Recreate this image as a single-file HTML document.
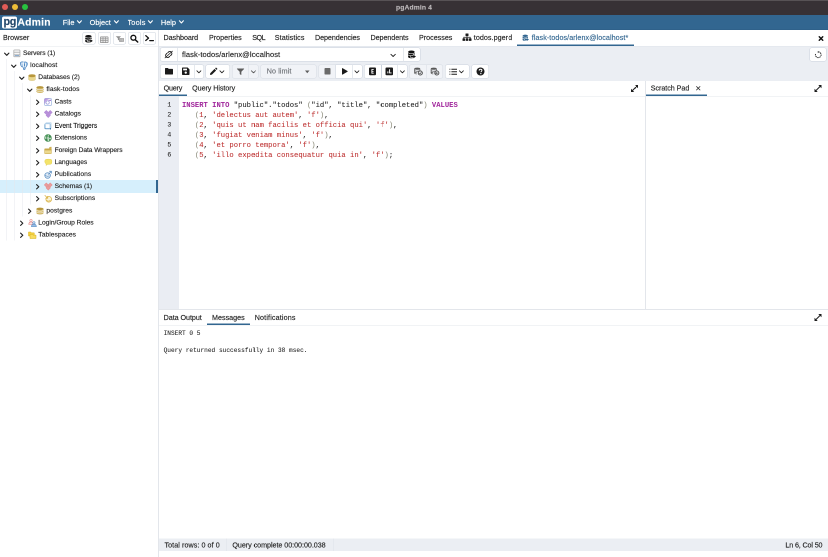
<!DOCTYPE html>
<html><head><meta charset="utf-8"><title>pgAdmin 4</title>
<style>
html,body{margin:0;padding:0;background:#fff;overflow:hidden;}
body{width:828px;height:557px;position:relative;}
#root{will-change:transform;position:absolute;left:0;top:0;width:1656px;height:1114px;transform:scale(.5);transform-origin:0 0;font-family:"Liberation Sans",sans-serif;font-size:14px;color:#222;background:#fff;overflow:hidden;-webkit-text-stroke:.27px currentColor;}
#root *{box-sizing:border-box;}
.abs{position:absolute;}
.t{position:absolute;white-space:nowrap;line-height:1;}
#titlebar{left:0;top:0;width:1656px;height:30px;background:#373135;border-top:2px solid #575255;}
.dot{position:absolute;width:12px;height:12px;border-radius:50%;}
#menubar{left:0;top:29.500px;width:1656px;height:30.500px;background:#326690;border-bottom:1.5px solid #2b5b83;}
.menu{color:#fff;font-size:14.6px;top:9px;}
.btn{position:absolute;background:#fff;border:1.5px solid #cbd2dc;}
.btn.dis{background:#f1f3f7;border-color:#d6dbe3;}
.row{position:absolute;left:0;width:316px;height:24px;}
.lbl{position:absolute;font-size:13.15px;white-space:nowrap;line-height:1;color:#222;}
.tab{position:absolute;font-size:14.2px;white-space:nowrap;line-height:1;color:#222;}
.code{position:absolute;left:364px;font-family:"Liberation Mono",monospace;font-size:14.37px;line-height:20px;height:20px;white-space:pre;color:#222;-webkit-text-stroke:.12px currentColor;}
.kw{color:#a0259b;font-weight:bold;-webkit-text-stroke:0;}
.s{color:#bd3030;}
.n{color:#bd3030;}
.p{color:#8c8c7c;}
.ln{position:absolute;left:318px;width:24.5px;text-align:right;font-family:"Liberation Mono",monospace;font-size:13px;-webkit-text-stroke:.15px currentColor;line-height:20px;height:20px;color:#222;}
.msg{-webkit-text-stroke:.12px currentColor;position:absolute;left:327.2px;font-family:"Liberation Mono",monospace;font-size:12.3px;line-height:1;white-space:pre;color:#222;}
svg{position:absolute;overflow:visible;}
.guide{position:absolute;width:1px;background:#e4e7ec;}
</style></head><body>
<div id="root">
<div id="titlebar" class="abs">
<div class="dot" style="left:4px;top:6px;background:#e25b56;"></div>
<div class="dot" style="left:24px;top:6px;background:#efbd37;"></div>
<div class="dot" style="left:44px;top:6px;background:#28c23f;"></div>
<div class="t" style="left:0;width:1656px;text-align:center;top:5.500px;font-size:13.500px;font-weight:bold;color:#bdb9bb;letter-spacing:.25px;">pgAdmin 4</div>
</div>
<div id="menubar" class="abs">
<div class="abs" style="left:4px;top:3.500px;width:30px;height:24px;background:#fff;border-radius:4px;"></div>
<div class="t" style="left:7px;top:3.500px;font-size:21.500px;font-weight:bold;color:#24486a;letter-spacing:-.6px;">pg</div>
<div class="t" style="left:35px;top:4.500px;font-size:20.500px;font-weight:bold;color:#fff;letter-spacing:.55px;">Admin</div>
<div class="t" style="left:125.6px;top:8px;font-size:14.72px;letter-spacing:-0.160px;color:#fff;">File</div>
<svg style="left:153.8px;top:11.5px" width="9.6" height="5.5" viewBox="0 0 9.6 5.5"><path d="M0.8 0.6 L4.8 4.9 L8.799999999999999 0.6" fill="none" stroke="#fff" stroke-width="2.2" stroke-linecap="round" stroke-linejoin="round"/></svg>
<div class="t" style="left:179.3px;top:8px;font-size:14.72px;letter-spacing:-0.056px;color:#fff;">Object</div>
<svg style="left:228.3px;top:11.5px" width="9.6" height="5.5" viewBox="0 0 9.6 5.5"><path d="M0.8 0.6 L4.8 4.9 L8.799999999999999 0.6" fill="none" stroke="#fff" stroke-width="2.2" stroke-linecap="round" stroke-linejoin="round"/></svg>
<div class="t" style="left:254.7px;top:8px;font-size:14.72px;letter-spacing:0.474px;color:#fff;">Tools</div>
<svg style="left:296px;top:11.5px" width="9.6" height="5.5" viewBox="0 0 9.6 5.5"><path d="M0.8 0.6 L4.8 4.9 L8.799999999999999 0.6" fill="none" stroke="#fff" stroke-width="2.2" stroke-linecap="round" stroke-linejoin="round"/></svg>
<div class="t" style="left:321.8px;top:8px;font-size:14.72px;letter-spacing:-0.038px;color:#fff;">Help</div>
<svg style="left:358px;top:11.5px" width="9.6" height="5.5" viewBox="0 0 9.6 5.5"><path d="M0.8 0.6 L4.8 4.9 L8.799999999999999 0.6" fill="none" stroke="#fff" stroke-width="2.2" stroke-linecap="round" stroke-linejoin="round"/></svg>
</div>
<div class="abs" style="left:0;top:60px;width:316px;height:33px;background:#fff;border-bottom:1px solid #e3e6eb;"></div>
<div class="t" style="left:6px;top:68px;font-size:14.31px;letter-spacing:-0.002px;">Browser</div>
<div class="abs" style="left:316px;top:60px;width:2px;height:1054px;background:#e3e6eb;"></div>
<div class="btn" style="left:165px;top:64px;width:26px;height:24.500px;border-radius:4px;"></div>
<div class="btn" style="left:196px;top:64px;width:26px;height:24.500px;border-radius:4px;"></div>
<div class="btn" style="left:226px;top:64px;width:26px;height:24.500px;border-radius:4px;"></div>
<div class="btn" style="left:256px;top:64px;width:26px;height:24.500px;border-radius:4px;"></div>
<div class="btn" style="left:286px;top:64px;width:26px;height:24.500px;border-radius:4px;"></div>
<svg style="left:170px;top:69.500px" width="16" height="15.500" viewBox="0 0 16 16">
<ellipse cx="6.800" cy="2.900" rx="6.600" ry="2.900" fill="#111"/>
<path d="M0.200 4.400v3.200c0 1.500 3 2.600 6.600 2.600s6.600-1.100 6.600-2.600V4.400c0 1.400-3 2.300-6.600 2.300S.2 5.800.2 4.400z" fill="#111"/>
<path d="M0.200 8.800v4c0 1.500 3 2.700 6.600 2.700s6.600-1.200 6.600-2.700V8.800c0 1.500-3 2.500-6.600 2.500S.2 10.300.2 8.800z" fill="#111"/>
<path d="M5.600 10.800h5.100V8.400l5.200 3.700-5.200 3.700v-2.400H5.600z" fill="#fff" stroke="#fff" stroke-width="2" stroke-linejoin="round"/><path d="M5.600 10.800h5.100V8.400l5.200 3.700-5.200 3.700v-2.400H5.600z" fill="#111"/>
</svg>
<svg style="left:200px;top:73px" width="17" height="13" viewBox="0 0 17 13">
<rect x=".8" y=".8" width="15.4" height="11.4" rx="1" fill="#e9e9e9" stroke="#8d8d8d" stroke-width="1.4"/>
<path d="M6 1v11M11 1v11M1 4.600h15M1 8.400h15" stroke="#8d8d8d" stroke-width="1.2" fill="none"/>
</svg>
<svg style="left:231px;top:72px" width="17" height="12" viewBox="0 0 17 12">
<path d="M0.500 0.500h10.500L7.300 4.500v4.500L4.700 7.500V4.500z" fill="#8f8f8f"/>
<rect x="7.600" y="4.600" width="8.800" height="6.800" rx=".8" fill="#d9d9d9" stroke="#9a9a9a" stroke-width="1.1"/>
<path d="M7.600 7h8.800M7.600 9.200h8.800M11 4.600v6.800" stroke="#9a9a9a" stroke-width=".9" fill="none"/>
</svg>
<svg style="left:260px;top:68.500px" width="17" height="16" viewBox="0 0 17 16">
<circle cx="6.700" cy="6.500" r="4.900" fill="none" stroke="#111" stroke-width="2.600"/>
<path d="M10.400 10.300l5 4.700" stroke="#111" stroke-width="3" stroke-linecap="round"/>
</svg>
<svg style="left:290px;top:70px" width="18" height="13" viewBox="0 0 18 13">
<path d="M1.500 1.300l5.600 4.900L1.500 11" fill="none" stroke="#111" stroke-width="2.500" stroke-linecap="round" stroke-linejoin="round"/>
<path d="M9.500 11.300h7.300" stroke="#111" stroke-width="2.400" stroke-linecap="round"/>
</svg>
<div class="abs" style="left:0;top:359.9px;width:316px;height:26.300px;background:#d6effc;border-right:4px solid #326690;"></div>
<div class="guide" style="left:13.1px;top:117.9px;height:363.4px;"></div>
<div class="guide" style="left:28.9px;top:142.2px;height:339.2px;"></div>
<div class="guide" style="left:44.6px;top:166.4px;height:266.5px;"></div>
<div class="guide" style="left:60.6px;top:190.6px;height:218.1px;"></div>
<svg style="left:7.7px;top:104.5px" width="11" height="7" viewBox="0 0 11 7"><path d="M1.200 1.200L5.500 5.600 9.800 1.200" fill="none" stroke="#222" stroke-width="2.300" stroke-linecap="round" stroke-linejoin="round"/></svg>
<div class="abs" style="left:25.5px;top:98.5px;width:18px;height:17px;"><svg width="16" height="16" viewBox="0 0 16 16"><rect x="1.600" y=".9" width="12.400" height="13.800" rx="1.200" fill="#ececec" stroke="#a3a3a3" stroke-width="1.300"/>
<path d="M1.600 5.400h12.400M1.600 10h12.400" stroke="#a3a3a3" stroke-width="1.200"/>
<path d="M3.400 12.400h8.800" stroke="#5f8fc0" stroke-width="1.500"/><path d="M3.400 7.700h8.800M3.400 3.200h8.800" stroke="#fafafa" stroke-width="1.500"/></svg></div>
<div class="t" style="left:46.0px;top:99px;font-size:13.33px;letter-spacing:-0.142px;">Servers (1)</div>
<svg style="left:21.5px;top:128.5px" width="11" height="7" viewBox="0 0 11 7"><path d="M1.200 1.200L5.500 5.600 9.800 1.200" fill="none" stroke="#222" stroke-width="2.300" stroke-linecap="round" stroke-linejoin="round"/></svg>
<div class="abs" style="left:39.3px;top:122.5px;width:18px;height:17px;"><svg width="17" height="17" viewBox="0 0 17 17"><path d="M2.200 1.800C4.200.3 7 .5 8.500 1.300 10.500.3 14 .5 15.300 2.500c1 1.800.2 5.300-1.600 8-.6.900-1.400.9-1.900.5 0 1.500-.2 3.500-.8 4.700-.6 1.100-2.300 1.200-3 .1-.6-1-.5-3.300-.6-4.800-1.500.6-3.300-.2-4.300-2.200C2 6.500 1 3.200 2.200 1.800z" fill="#8db7e0" stroke="#3f7ab8" stroke-width="1.100" stroke-linejoin="round"/>
<path d="M8.200 2c-.6 2.600-.4 6 .1 9.400M11.700 3.300c.7 2 .3 4.800-.2 7.300" fill="none" stroke="#fff" stroke-width="1.600" stroke-linecap="round"/><path d="M4 3.400c.9-.6 2-.5 2.700.2M4.900 5v3" fill="none" stroke="#fff" stroke-width="1.400" stroke-linecap="round"/><path d="M9.800 4.500v4" fill="none" stroke="#2f6ba8" stroke-width="1.200" stroke-linecap="round"/></svg></div>
<div class="t" style="left:60.3px;top:123px;font-size:13.33px;letter-spacing:0.207px;">localhost</div>
<svg style="left:37.7px;top:152.5px" width="11" height="7" viewBox="0 0 11 7"><path d="M1.200 1.200L5.500 5.600 9.800 1.200" fill="none" stroke="#222" stroke-width="2.300" stroke-linecap="round" stroke-linejoin="round"/></svg>
<div class="abs" style="left:55.5px;top:146.5px;width:18px;height:17px;"><svg width="16" height="16" viewBox="0 0 16 16"><path d="M1.300 4v8c0 1.200 3 2.100 6.700 2.100s6.700-.9 6.700-2.100V4z" fill="#e9d78e" stroke="#cdb462" stroke-width=".9"/><path d="M1.300 4v1.500c0 1.100 3 1.900 6.700 1.900s6.700-.8 6.700-1.900V4z" fill="#b8973c"/><ellipse cx="8" cy="4" rx="6.700" ry="2" fill="#b8973c" stroke="#b8973c" stroke-width=".9"/></svg></div>
<div class="t" style="left:76.6px;top:147px;font-size:13.33px;letter-spacing:-0.047px;">Databases (2)</div>
<svg style="left:53.8px;top:176.5px" width="11" height="7" viewBox="0 0 11 7"><path d="M1.200 1.200L5.500 5.600 9.800 1.200" fill="none" stroke="#222" stroke-width="2.300" stroke-linecap="round" stroke-linejoin="round"/></svg>
<div class="abs" style="left:71.6px;top:170.5px;width:18px;height:17px;"><svg width="16" height="16" viewBox="0 0 16 16">
<path d="M1.300 10.800v1.500c0 1.200 3 2.100 6.700 2.100s6.700-.9 6.700-2.100v-1.500c0 1.200-3 2.100-6.700 2.100s-6.700-.9-6.700-2.100z" fill="#dcc268" stroke="#c2a24a" stroke-width=".8"/>
<path d="M1.300 7.200v1.700c0 1.200 3 2.100 6.700 2.100s6.700-.9 6.700-2.100V7.200c0 1.200-3 2.100-6.700 2.100S1.300 8.400 1.300 7.200z" fill="#e7d283" stroke="#c2a24a" stroke-width=".8"/>
<path d="M1.300 3.700v1.600c0 1.200 3 2.100 6.700 2.100s6.700-.9 6.700-2.100V3.700z" fill="#e7d283" stroke="#c2a24a" stroke-width=".8"/>
<ellipse cx="8" cy="3.700" rx="6.700" ry="2" fill="#b8973c" stroke="#b08f35" stroke-width=".8"/></svg></div>
<div class="t" style="left:92.7px;top:171px;font-size:13.33px;letter-spacing:0.174px;">flask-todos</div>
<svg style="left:71.7px;top:199.0px" width="7" height="11" viewBox="0 0 7 11"><path d="M1.200 1.200L5.600 5.500 1.200 9.800" fill="none" stroke="#222" stroke-width="2.300" stroke-linecap="round" stroke-linejoin="round"/></svg>
<div class="abs" style="left:87.7px;top:195.5px;width:18px;height:17px;"><svg width="16" height="16" viewBox="0 0 16 16"><rect x="1" y="1" width="14" height="14" rx="2" fill="#fff" stroke="#9fb6e0" stroke-width="1.400"/>
<path d="M1 9V3a2 2 0 0 1 2-2h7z" fill="#c9a6e6"/><path d="M1.700 11V3a1.300 1.300 0 0 1 1.300-1.300h8" fill="none" stroke="#a57fd3" stroke-width="1.400"/>
<circle cx="7.200" cy="9" r="3.300" fill="#fff" stroke="#8d8fd6" stroke-width="1.300"/><path d="M8.500 6.500c1-1.800 3-2.500 4.600-1.600M13.300 3v2.300H11" fill="none" stroke="#a57fd3" stroke-width="1.300"/></svg></div>
<div class="t" style="left:109.2px;top:196px;font-size:13.33px;letter-spacing:-0.009px;">Casts</div>
<svg style="left:71.7px;top:223.0px" width="7" height="11" viewBox="0 0 7 11"><path d="M1.200 1.200L5.600 5.500 1.200 9.800" fill="none" stroke="#222" stroke-width="2.300" stroke-linecap="round" stroke-linejoin="round"/></svg>
<div class="abs" style="left:87.7px;top:219.5px;width:18px;height:17px;"><svg width="17" height="16" viewBox="0 0 17 16"><g fill="#b790da" stroke="#b48ad6" stroke-width="1.200" stroke-linejoin="round">
<path d="M4.600 .8l4 4-4 4-4-4z"/><path d="M12.400 .8l4 4-4 4-4-4z"/><path d="M8.500 6.300l4.400 4.400-4.400 4.400-4.400-4.400z"/></g></svg></div>
<div class="t" style="left:109.2px;top:220px;font-size:13.33px;letter-spacing:0.014px;">Catalogs</div>
<svg style="left:71.7px;top:247.0px" width="7" height="11" viewBox="0 0 7 11"><path d="M1.200 1.200L5.600 5.500 1.200 9.800" fill="none" stroke="#222" stroke-width="2.300" stroke-linecap="round" stroke-linejoin="round"/></svg>
<div class="abs" style="left:87.7px;top:243.5px;width:18px;height:17px;"><svg width="16" height="16" viewBox="0 0 16 16"><path d="M3.500 1.600h10.500v10.500" fill="none" stroke="#a9cbe6" stroke-width="1.400"/><rect x="1.800" y="3.400" width="10.400" height="10" rx="1.200" fill="#fff" stroke="#8ab6dc" stroke-width="1.500"/>
<path d="M1.800 5v7.200a1.200 1.200 0 0 0 1.200 1.200h7" fill="none" stroke="#4f8fc4" stroke-width="1.500"/>
<circle cx="12.700" cy="13.500" r="1.500" fill="#2d6aa3"/></svg></div>
<div class="t" style="left:109.2px;top:244px;font-size:13.33px;letter-spacing:-0.053px;">Event Triggers</div>
<svg style="left:71.7px;top:271.0px" width="7" height="11" viewBox="0 0 7 11"><path d="M1.200 1.200L5.600 5.500 1.200 9.800" fill="none" stroke="#222" stroke-width="2.300" stroke-linecap="round" stroke-linejoin="round"/></svg>
<div class="abs" style="left:87.7px;top:267.5px;width:18px;height:17px;"><svg width="16" height="16" viewBox="0 0 16 16"><circle cx="8" cy="8" r="6.900" fill="#e9f3ea" stroke="#3f8a4f" stroke-width="1.200"/>
<path d="M8 1.100c-3 2-3 11.800 0 13.800M1.100 8h13.800" stroke="#3f8a4f" stroke-width="1.100" fill="none"/>
<path d="M2.600 4c1.200-1.600 3-2.700 5-2.900l.6 3.900-3.800 2.200z" fill="#4f9a5e"/><path d="M9.500 1.400c2.600.6 4.600 2.600 5.200 5.200l-3.600 1.200-2.400-2.300z" fill="#3f8a4f"/>
<path d="M2 10l3.500-1 2 2.200-.5 3.600C4.500 14.300 2.600 12.500 2 10z" fill="#3f8a4f"/><path d="M9.600 9.700l4.300.3c-.6 2.200-2.300 3.900-4.500 4.600z" fill="#4f9a5e"/></svg></div>
<div class="t" style="left:109.2px;top:268px;font-size:13.33px;letter-spacing:-0.031px;">Extensions</div>
<svg style="left:71.7px;top:296.0px" width="7" height="11" viewBox="0 0 7 11"><path d="M1.200 1.200L5.600 5.500 1.200 9.800" fill="none" stroke="#222" stroke-width="2.300" stroke-linecap="round" stroke-linejoin="round"/></svg>
<div class="abs" style="left:87.7px;top:292.5px;width:18px;height:17px;"><svg width="16" height="16" viewBox="0 0 16 16"><rect x="1.200" y="4.500" width="13.600" height="10" rx="1" fill="#ecd98f" stroke="#c8a94a" stroke-width="1"/>
<rect x="1.200" y="4.500" width="13.600" height="3.300" fill="#c8a94a"/><path d="M11 4.500V1.800l3.500-.9v3.600" fill="#d9b44a" stroke="#b8963a" stroke-width=".8"/></svg></div>
<div class="t" style="left:109.2px;top:293px;font-size:13.33px;letter-spacing:-0.119px;">Foreign Data Wrappers</div>
<svg style="left:71.7px;top:320.0px" width="7" height="11" viewBox="0 0 7 11"><path d="M1.200 1.200L5.600 5.500 1.200 9.800" fill="none" stroke="#222" stroke-width="2.300" stroke-linecap="round" stroke-linejoin="round"/></svg>
<div class="abs" style="left:87.7px;top:316.5px;width:18px;height:17px;"><svg width="17" height="16" viewBox="0 0 17 16"><path d="M2.500 2.500c3-1.400 8-1.600 12.300-.3 1.400 2.500 1.200 6.300-.3 8.800-2.600.8-5 .9-7 .6L4 14l.3-3C1.600 9.300 1 5.300 2.500 2.500z" fill="#f3e36a" stroke="#e3cf4a" stroke-width="1"/></svg></div>
<div class="t" style="left:109.2px;top:317px;font-size:13.33px;letter-spacing:-0.078px;">Languages</div>
<svg style="left:71.7px;top:344.0px" width="7" height="11" viewBox="0 0 7 11"><path d="M1.200 1.200L5.600 5.500 1.200 9.800" fill="none" stroke="#222" stroke-width="2.300" stroke-linecap="round" stroke-linejoin="round"/></svg>
<div class="abs" style="left:87.7px;top:340.5px;width:18px;height:17px;"><svg width="17" height="17" viewBox="0 0 17 17"><circle cx="7.200" cy="10" r="5.600" fill="#dfeaf5" stroke="#5b8fc2" stroke-width="1.500"/>
<path d="M2.500 9c1.500 2.500 5 3.500 8.500 1.500" fill="none" stroke="#5b8fc2" stroke-width="1.300"/>
<path d="M9 7.500L14.500 2M10.800 1.600h4v4" fill="none" stroke="#5b8fc2" stroke-width="1.500" stroke-linecap="round" stroke-linejoin="round"/></svg></div>
<div class="t" style="left:109.2px;top:341px;font-size:13.33px;letter-spacing:0.123px;">Publications</div>
<svg style="left:71.7px;top:368.0px" width="7" height="11" viewBox="0 0 7 11"><path d="M1.200 1.200L5.600 5.500 1.200 9.800" fill="none" stroke="#222" stroke-width="2.300" stroke-linecap="round" stroke-linejoin="round"/></svg>
<div class="abs" style="left:87.7px;top:364.5px;width:18px;height:17px;"><svg width="17" height="16" viewBox="0 0 17 16"><g fill="#e99c9c" stroke="#e58f8f" stroke-width="1.200" stroke-linejoin="round">
<path d="M4.600 .8l4 4-4 4-4-4z"/><path d="M12.400 .8l4 4-4 4-4-4z"/><path d="M8.500 6.300l4.400 4.400-4.400 4.400-4.400-4.400z"/></g></svg></div>
<div class="t" style="left:109.2px;top:365px;font-size:13.33px;letter-spacing:-0.045px;">Schemas (1)</div>
<svg style="left:71.7px;top:392.0px" width="7" height="11" viewBox="0 0 7 11"><path d="M1.200 1.200L5.600 5.500 1.200 9.800" fill="none" stroke="#222" stroke-width="2.300" stroke-linecap="round" stroke-linejoin="round"/></svg>
<div class="abs" style="left:87.7px;top:388.5px;width:18px;height:17px;"><svg width="17" height="17" viewBox="0 0 17 17"><circle cx="9.500" cy="9.500" r="5.700" fill="#fbf3d6" stroke="#d9b44a" stroke-width="1.500"/>
<path d="M5 11c1.500 2.500 5.500 3 8 .5" fill="none" stroke="#d9b44a" stroke-width="1.200"/>
<path d="M1.800 1.800l5.400 5.400M7.500 3.400v4h-4" fill="none" stroke="#d9b44a" stroke-width="1.500" stroke-linecap="round" stroke-linejoin="round"/></svg></div>
<div class="t" style="left:109.2px;top:389px;font-size:13.33px;letter-spacing:0.093px;">Subscriptions</div>
<svg style="left:55.6px;top:417.0px" width="7" height="11" viewBox="0 0 7 11"><path d="M1.200 1.200L5.600 5.500 1.200 9.800" fill="none" stroke="#222" stroke-width="2.300" stroke-linecap="round" stroke-linejoin="round"/></svg>
<div class="abs" style="left:71.6px;top:413.5px;width:18px;height:17px;"><svg width="16" height="16" viewBox="0 0 16 16">
<path d="M1.300 10.800v1.500c0 1.200 3 2.100 6.700 2.100s6.700-.9 6.700-2.100v-1.500c0 1.200-3 2.100-6.700 2.100s-6.700-.9-6.700-2.100z" fill="#dcc268" stroke="#c2a24a" stroke-width=".8"/>
<path d="M1.300 7.200v1.700c0 1.200 3 2.100 6.700 2.100s6.700-.9 6.700-2.100V7.200c0 1.200-3 2.100-6.700 2.100S1.300 8.400 1.300 7.200z" fill="#e7d283" stroke="#c2a24a" stroke-width=".8"/>
<path d="M1.300 3.700v1.600c0 1.200 3 2.100 6.700 2.100s6.700-.9 6.700-2.100V3.700z" fill="#e7d283" stroke="#c2a24a" stroke-width=".8"/>
<ellipse cx="8" cy="3.700" rx="6.700" ry="2" fill="#b8973c" stroke="#b08f35" stroke-width=".8"/></svg></div>
<div class="t" style="left:92.7px;top:414px;font-size:13.33px;letter-spacing:0.138px;">postgres</div>
<svg style="left:39.5px;top:441.0px" width="7" height="11" viewBox="0 0 7 11"><path d="M1.200 1.200L5.600 5.500 1.200 9.800" fill="none" stroke="#222" stroke-width="2.300" stroke-linecap="round" stroke-linejoin="round"/></svg>
<div class="abs" style="left:55.5px;top:437.5px;width:18px;height:17px;"><svg width="18" height="16" viewBox="0 0 18 16"><circle cx="6" cy="3.200" r="2.300" fill="#fff" stroke="#e58b8b" stroke-width="1.300"/>
<path d="M1.500 10.500c.3-3 2-4.500 4.500-4.500s4.200 1.500 4.500 4.500z" fill="#fdf0f0" stroke="#e58b8b" stroke-width="1.300"/>
<circle cx="11.800" cy="7.600" r="2.300" fill="#e9f1fa" stroke="#5b8fc8" stroke-width="1.300"/>
<path d="M6.800 15.200c.3-3.200 2.300-4.800 5-4.800s4.700 1.600 5 4.800z" fill="#9dbfe3" stroke="#5b8fc8" stroke-width="1.300"/></svg></div>
<div class="t" style="left:76.6px;top:438px;font-size:13.33px;letter-spacing:-0.030px;">Login/Group Roles</div>
<svg style="left:39.5px;top:465.0px" width="7" height="11" viewBox="0 0 7 11"><path d="M1.200 1.200L5.600 5.500 1.200 9.800" fill="none" stroke="#222" stroke-width="2.300" stroke-linecap="round" stroke-linejoin="round"/></svg>
<div class="abs" style="left:55.5px;top:461.5px;width:18px;height:17px;"><svg width="17" height="16" viewBox="0 0 17 16"><path d="M1 2h4.500l1.500 1.700h5.500V10H1z" fill="#f4d03f" stroke="#d9b018" stroke-width="1"/>
<path d="M4 6.500h4.500L10 8.200h6V15H4z" fill="#f7dc5f" stroke="#d9b018" stroke-width="1"/></svg></div>
<div class="t" style="left:76.6px;top:462px;font-size:13.33px;letter-spacing:0.126px;">Tablespaces</div>
<div class="abs" style="left:318px;top:60px;width:1338px;height:33px;background:#fff;border-bottom:1px solid #e3e6eb;"></div>
<div class="t" style="left:327px;top:68px;font-size:14.31px;letter-spacing:-0.077px;">Dashboard</div>
<div class="t" style="left:418px;top:68px;font-size:14.31px;letter-spacing:0.037px;">Properties</div>
<div class="t" style="left:504.4px;top:68px;font-size:14.31px;letter-spacing:-0.869px;">SQL</div>
<div class="t" style="left:549.6px;top:68px;font-size:14.31px;letter-spacing:0.224px;">Statistics</div>
<div class="t" style="left:630px;top:68px;font-size:14.31px;letter-spacing:-0.129px;">Dependencies</div>
<div class="t" style="left:741px;top:68px;font-size:14.31px;letter-spacing:-0.111px;">Dependents</div>
<div class="t" style="left:838px;top:68px;font-size:14.31px;letter-spacing:0.001px;">Processes</div>
<svg style="left:925px;top:66.500px" width="18" height="15" viewBox="0 0 18 15"><g fill="#1b1b1b">
<rect x="6" y="0" width="6" height="5" rx=".7"/><rect x="0" y="9.800" width="5.200" height="5" rx=".7"/><rect x="6.400" y="9.800" width="5.200" height="5" rx=".7"/><rect x="12.800" y="9.800" width="5.200" height="5" rx=".7"/></g>
<path d="M9 4.800v5.200M2.600 10V7.400h12.800V10" fill="none" stroke="#1b1b1b" stroke-width="1.500"/></svg>
<div class="t" style="left:947.6px;top:68px;font-size:14.31px;letter-spacing:0.107px;">todos.pgerd</div>
<svg style="left:1044.500px;top:68.500px" width="13" height="13.500" viewBox="0 0 16 16">
<ellipse cx="6.800" cy="2.900" rx="6.600" ry="2.900" fill="#326690"/>
<path d="M0.200 4.400v3.200c0 1.500 3 2.600 6.600 2.600s6.600-1.100 6.600-2.600V4.400c0 1.400-3 2.300-6.600 2.300S.2 5.800.2 4.400z" fill="#326690"/>
<path d="M0.200 8.800v4c0 1.500 3 2.700 6.600 2.700s6.600-1.200 6.600-2.700V8.800c0 1.500-3 2.500-6.600 2.500S.2 10.300.2 8.800z" fill="#326690"/>
<path d="M5.600 10.800h5.100V8.400l5.200 3.700-5.200 3.700v-2.400H5.600z" fill="#fff" stroke="#fff" stroke-width="2" stroke-linejoin="round"/><path d="M5.600 10.800h5.100V8.400l5.200 3.700-5.200 3.700v-2.400H5.600z" fill="#326690"/>
</svg>
<div class="t" style="left:1063.5px;top:68px;font-size:14.31px;letter-spacing:0.158px;color:#326690;">flask-todos/arlenx@localhost*</div>
<div class="abs" style="left:1034px;top:88.500px;width:234px;height:3.500px;background:#326690;"></div>
<svg style="left:1636.500px;top:71.500px" width="10" height="10" viewBox="0 0 10 10"><path d="M1.500 1.500l7 7M8.500 1.500l-7 7" stroke="#111" stroke-width="2.900" stroke-linecap="round"/></svg>
<div class="abs" style="left:318px;top:92px;width:1338px;height:70px;background:#ebeef3;border-top:1.500px solid #dfe3ea;"></div>
<div class="btn" style="left:320px;top:94.500px;width:35px;height:28.500px;border-radius:4px 0 0 4px;"></div>
<div class="btn" style="left:354px;top:94.500px;width:454px;height:28.500px;border-radius:0;"></div>
<div class="btn" style="left:807px;top:94.500px;width:34px;height:28.500px;border-radius:0 4px 4px 0;"></div>
<svg style="left:327.500px;top:100px" width="19" height="18" viewBox="0 0 19 18"><g transform="rotate(-42 9.500 9)" fill="none" stroke="#1b1b1b" stroke-linecap="round">
<path d="M8.300 5H6.500a4 4 0 0 0 0 8h1.800" stroke-width="1.900"/><path d="M10.700 5h1.800a4 4 0 0 1 0 8h-1.800" stroke-width="1.900"/>
<path d="M-.5 9h20" stroke-width="1.500"/></g></svg>
<div class="t" style="left:364px;top:101.3px;font-size:15.02px;letter-spacing:0.149px;">flask-todos/arlenx@localhost</div>
<svg style="left:780.5px;top:107.5px" width="10.5" height="5.6" viewBox="0 0 10.5 5.6"><path d="M0.8 0.6 L5.25 5.0 L9.7 0.6" fill="none" stroke="#222" stroke-width="1.8" stroke-linecap="round" stroke-linejoin="round"/></svg>
<svg style="left:816px;top:101px" width="16" height="16" viewBox="0 0 16 16">
<ellipse cx="6.800" cy="2.900" rx="6.600" ry="2.900" fill="#111"/>
<path d="M0.200 4.400v3.200c0 1.500 3 2.600 6.600 2.600s6.600-1.100 6.600-2.600V4.400c0 1.400-3 2.300-6.600 2.300S.2 5.800.2 4.400z" fill="#111"/>
<path d="M0.200 8.800v4c0 1.500 3 2.700 6.600 2.700s6.600-1.200 6.600-2.700V8.800c0 1.500-3 2.500-6.600 2.500S.2 10.300.2 8.800z" fill="#111"/>
<path d="M5.600 10.800h5.100V8.400l5.200 3.700-5.200 3.700v-2.400H5.600z" fill="#fff" stroke="#fff" stroke-width="2" stroke-linejoin="round"/><path d="M5.600 10.800h5.100V8.400l5.200 3.700-5.200 3.700v-2.400H5.600z" fill="#111"/>
</svg>
<div class="btn" style="left:1619px;top:94.500px;width:34px;height:28.500px;border-radius:4px;"></div>
<svg style="left:1629px;top:102px" width="15" height="15" viewBox="0 0 15 15"><path d="M7.500 1.800a5.700 5.700 0 1 1-5.300 3.600" fill="none" stroke="#222" stroke-width="1.900" stroke-dasharray="2.800 1.400"/><path d="M7.800 .2v3.600L5.600 2z" fill="#222"/></svg>
<div class="btn" style="left:320px;top:128.5px;width:36px;height:28.5px;border-radius:4px 0 0 4px;"></div>
<div class="btn" style="left:355px;top:128.5px;width:35px;height:28.5px;border-radius:0;"></div>
<div class="btn" style="left:389px;top:128.5px;width:18.5px;height:28.5px;border-radius:0 4px 4px 0;"></div>
<svg style="left:330px;top:136px" width="16" height="13" viewBox="0 0 16 13"><path d="M1.300 0h4.500l1.600 1.800h7.300c.7 0 1.300.6 1.300 1.300v8.600c0 .7-.6 1.300-1.300 1.300H1.300C.6 13 0 12.400 0 11.700V1.300C0 .6.600 0 1.300 0z" fill="#1b1b1b"/></svg>
<svg style="left:364px;top:135px" width="15" height="15" viewBox="0 0 15 15"><path d="M1.500 0h9.800L15 3.700v9.800c0 .8-.7 1.500-1.500 1.500h-12C.7 15 0 14.300 0 13.500v-12C0 .7.700 0 1.500 0z" fill="#1b1b1b"/><rect x="2.300" y="2.300" width="7.700" height="3.400" fill="#fff"/><circle cx="7.500" cy="10.300" r="2.300" fill="#fff"/></svg>
<svg style="left:393px;top:140.5px" width="9.6" height="5.2" viewBox="0 0 9.6 5.2"><path d="M0.8 0.6 L4.8 4.6000000000000005 L8.799999999999999 0.6" fill="none" stroke="#222" stroke-width="1.7" stroke-linecap="round" stroke-linejoin="round"/></svg>
<div class="btn" style="left:411px;top:128.5px;width:49px;height:28.5px;border-radius:4px;"></div>
<svg style="left:420px;top:135px" width="15" height="15" viewBox="0 0 15 15"><path d="M0 15l.7-3.800 8.400-8.400 3.100 3.100-8.400 8.400z" fill="#1b1b1b"/><path d="M10.200 1.700l1-1c.5-.5 1.200-.5 1.700 0l1.400 1.400c.5.500.5 1.200 0 1.700l-1 1z" fill="#1b1b1b"/></svg>
<svg style="left:438.5px;top:140.5px" width="9.6" height="5.2" viewBox="0 0 9.6 5.2"><path d="M0.8 0.6 L4.8 4.6000000000000005 L8.799999999999999 0.6" fill="none" stroke="#222" stroke-width="1.7" stroke-linecap="round" stroke-linejoin="round"/></svg>
<div class="btn dis" style="left:464px;top:128.5px;width:33px;height:28.5px;border-radius:4px 0 0 4px;"></div>
<div class="btn dis" style="left:496px;top:128.5px;width:21px;height:28.5px;border-radius:0 4px 4px 0;"></div>
<svg style="left:474px;top:136.500px" width="14" height="13" viewBox="0 0 14 13"><path d="M.3 0h13.400c.5 0 .7.600.4.900L8.700 6.500v5.800c0 .5-.6.800-1 .5l-2-1.500c-.2-.1-.3-.3-.3-.5V6.500L0 .9C-.3.600-.1 0 .3 0z" fill="#5c5c5c"/></svg>
<svg style="left:501.5px;top:140.5px" width="9.6" height="5.2" viewBox="0 0 9.6 5.2"><path d="M0.8 0.6 L4.8 4.6000000000000005 L8.799999999999999 0.6" fill="none" stroke="#555" stroke-width="1.7" stroke-linecap="round" stroke-linejoin="round"/></svg>
<div class="btn dis" style="left:521px;top:128.5px;width:112px;height:28.5px;border-radius:4px;"></div>
<div class="t" style="left:533.5px;top:135px;font-size:14.31px;letter-spacing:0.230px;color:#6c7075;">No limit</div>
<svg style="left:610px;top:141px" width="9" height="5.500" viewBox="0 0 9 5.500"><path d="M0 0h9L4.500 5.500z" fill="#5f5f5f"/></svg>
<div class="btn dis" style="left:636.5px;top:128.5px;width:35.5px;height:28.5px;border-radius:4px 0 0 4px;"></div>
<div class="btn" style="left:671px;top:128.5px;width:34px;height:28.5px;border-radius:0;"></div>
<div class="btn" style="left:704px;top:128.5px;width:20.5px;height:28.5px;border-radius:0 4px 4px 0;"></div>
<div class="abs" style="left:648.500px;top:136px;width:12px;height:12.500px;background:#6a6a6a;border-radius:1.500px;"></div>
<svg style="left:683.500px;top:136px" width="11.500" height="13.500" viewBox="0 0 11.500 13.500"><path d="M1 .3l9.900 5.700c.6.400.6 1.100 0 1.500L1 13.200c-.5.300-1-.1-1-.7V1C0 .4.500 0 1 .3z" fill="#1b1b1b"/></svg>
<svg style="left:709px;top:140.5px" width="9.6" height="5.2" viewBox="0 0 9.6 5.2"><path d="M0.8 0.6 L4.8 4.6000000000000005 L8.799999999999999 0.6" fill="none" stroke="#222" stroke-width="1.7" stroke-linecap="round" stroke-linejoin="round"/></svg>
<div class="btn" style="left:728px;top:128.5px;width:35px;height:28.5px;border-radius:4px 0 0 4px;"></div>
<div class="btn" style="left:762px;top:128.5px;width:34px;height:28.5px;border-radius:0;"></div>
<div class="btn" style="left:795px;top:128.5px;width:20px;height:28.5px;border-radius:0 4px 4px 0;"></div>
<svg style="left:738px;top:135px" width="14" height="15.500" viewBox="0 0 14 15.500"><rect width="14" height="15.500" rx="2" fill="#1b1b1b"/><path d="M4.800 3.300h4.600v1.700H6.700v2h2.400v1.600H6.700v2h2.700v1.700H4.800z" fill="#fff"/></svg>
<svg style="left:771px;top:135px" width="15" height="15.500" viewBox="0 0 15 15.500"><rect width="15" height="15.500" rx="2" fill="#1b1b1b"/><path d="M3.800 7.800h1.900v4h-1.900zM7.200 3.600h1.900v6.300h3v1.900H7.200z" fill="#fff"/></svg>
<svg style="left:800px;top:140.5px" width="9.6" height="5.2" viewBox="0 0 9.6 5.2"><path d="M0.8 0.6 L4.8 4.6000000000000005 L8.799999999999999 0.6" fill="none" stroke="#222" stroke-width="1.7" stroke-linecap="round" stroke-linejoin="round"/></svg>
<div class="btn dis" style="left:818px;top:128.5px;width:36px;height:28.5px;border-radius:4px 0 0 4px;"></div>
<div class="btn dis" style="left:853px;top:128.5px;width:33px;height:28.5px;border-radius:0 4px 4px 0;"></div>
<svg style="left:828px;top:135px" width="18" height="16" viewBox="0 0 18 16">
<ellipse cx="6.500" cy="2.400" rx="6" ry="2.200" fill="#585858"/>
<g fill="none" stroke="#585858" stroke-width="1.500"><path d="M1.200 3v8c0 .9 1.900 1.700 4.300 1.900"/><path d="M11.800 3v3"/><path d="M1.200 5.800c.6 1 2.800 1.600 5.300 1.600 1.700 0 3.200-.3 4.200-.7"/><path d="M1.200 8.800c.5.900 2.300 1.500 4.500 1.600"/></g>
<circle cx="12.600" cy="11" r="4.100" fill="#f1f3f7" stroke="#4a4a4a" stroke-width="1.900"/><path d="M10.600 11l1.500 1.500 2.600-2.800" fill="none" stroke="#4a4a4a" stroke-width="1.500"/></svg>
<svg style="left:861px;top:135px" width="18" height="16" viewBox="0 0 18 16">
<ellipse cx="6.500" cy="2.400" rx="6" ry="2.200" fill="#585858"/>
<g fill="none" stroke="#585858" stroke-width="1.500"><path d="M1.200 3v8c0 .9 1.900 1.700 4.300 1.900"/><path d="M11.800 3v3"/><path d="M1.200 5.800c.6 1 2.800 1.600 5.300 1.600 1.700 0 3.200-.3 4.200-.7"/><path d="M1.200 8.800c.5.900 2.300 1.500 4.500 1.600"/></g>
<circle cx="12.600" cy="11" r="4.100" fill="#f1f3f7" stroke="#4a4a4a" stroke-width="1.900"/><path d="M10.400 11.200h4.600M12 9.400l-1.800 1.800 1.800 1.800" fill="none" stroke="#4a4a4a" stroke-width="1.400"/></svg>
<div class="btn" style="left:890px;top:128.5px;width:49px;height:28.5px;border-radius:4px;"></div>
<svg style="left:899px;top:136.500px" width="15" height="13" viewBox="0 0 15 13"><g fill="#1b1b1b"><rect x="0" y=".4" width="1.600" height="2.200"/><rect x="0" y="5.400" width="1.600" height="2.200"/><rect x="0" y="10.400" width="1.600" height="2.200"/></g><path d="M3.800 1.500H15M3.800 6.500H15M3.800 11.500H15" stroke="#1b1b1b" stroke-width="1.800"/></svg>
<svg style="left:917.5px;top:140.5px" width="9.6" height="5.2" viewBox="0 0 9.6 5.2"><path d="M0.8 0.6 L4.8 4.6000000000000005 L8.799999999999999 0.6" fill="none" stroke="#222" stroke-width="1.7" stroke-linecap="round" stroke-linejoin="round"/></svg>
<div class="btn" style="left:942.5px;top:128.5px;width:35px;height:28.5px;border-radius:4px;"></div>
<svg style="left:953px;top:135px" width="16" height="16" viewBox="0 0 16 16"><circle cx="8" cy="8" r="8" fill="#1b1b1b"/><path d="M5.300 6.100c.1-1.600 1.200-2.500 2.800-2.500 1.500 0 2.700.9 2.700 2.300 0 1.700-2 1.900-2 3.500" fill="none" stroke="#fff" stroke-width="2"/><circle cx="8.700" cy="12.300" r="1.300" fill="#fff"/></svg>
<div class="abs" style="left:318px;top:162px;width:1338px;height:31px;background:#fff;border-bottom:1px solid #e3e6eb;"></div>
<div class="t" style="left:327.3px;top:169px;font-size:14.31px;letter-spacing:-0.410px;">Query</div>
<div class="t" style="left:384.3px;top:169px;font-size:14.31px;letter-spacing:-0.116px;">Query History</div>
<div class="abs" style="left:318px;top:188.500px;width:56px;height:3.500px;background:#326690;"></div>
<svg style="left:1262px;top:169.5px" width="14" height="14" viewBox="0 0 14 14"><path d="M3 11L11 3" stroke="#1b1b1b" stroke-width="2"/><path d="M7.600 0H14v6.400z" fill="#1b1b1b"/><path d="M0 7.600V14h6.400z" fill="#1b1b1b"/></svg>
<div class="abs" style="left:1290px;top:162px;width:2px;height:456px;background:#e3e6eb;"></div>
<div class="t" style="left:1301.5px;top:169px;font-size:14.31px;letter-spacing:-0.080px;">Scratch Pad</div>
<svg style="left:1391.500px;top:172px" width="9" height="9" viewBox="0 0 9 9"><path d="M1 1l7 7M8 1L1 8" stroke="#222" stroke-width="1.500" stroke-linecap="round"/></svg>
<div class="abs" style="left:1292px;top:188.500px;width:122px;height:3.500px;background:#326690;"></div>
<svg style="left:1629px;top:169.5px" width="14" height="14" viewBox="0 0 14 14"><path d="M3 11L11 3" stroke="#1b1b1b" stroke-width="2"/><path d="M7.600 0H14v6.400z" fill="#1b1b1b"/><path d="M0 7.600V14h6.400z" fill="#1b1b1b"/></svg>
<div class="abs" style="left:318px;top:193px;width:40px;height:425px;background:#eaedf3;"></div>
<div class="ln" style="top:199.5px;">1</div>
<div class="code" style="top:199.5px;"><span class="kw">INSERT INTO</span> "public"."todos" <span class="p">(</span>"id", "title", "completed"<span class="p">)</span> <span class="kw">VALUES</span></div>
<div class="ln" style="top:219.5px;">2</div>
<div class="code" style="top:219.5px;">   <span class="p">(</span><span class="n">1</span>, <span class="s">'delectus aut autem'</span>, <span class="s">'f'</span><span class="p">)</span>,</div>
<div class="ln" style="top:239.5px;">3</div>
<div class="code" style="top:239.5px;">   <span class="p">(</span><span class="n">2</span>, <span class="s">'quis ut nam facilis et officia qui'</span>, <span class="s">'f'</span><span class="p">)</span>,</div>
<div class="ln" style="top:259.5px;">4</div>
<div class="code" style="top:259.5px;">   <span class="p">(</span><span class="n">3</span>, <span class="s">'fugiat veniam minus'</span>, <span class="s">'f'</span><span class="p">)</span>,</div>
<div class="ln" style="top:279.5px;">5</div>
<div class="code" style="top:279.5px;">   <span class="p">(</span><span class="n">4</span>, <span class="s">'et porro tempora'</span>, <span class="s">'f'</span><span class="p">)</span>,</div>
<div class="ln" style="top:299.5px;">6</div>
<div class="code" style="top:299.5px;">   <span class="p">(</span><span class="n">5</span>, <span class="s">'illo expedita consequatur quia in'</span>, <span class="s">'f'</span><span class="p">)</span>;</div>
<div class="abs" style="left:318px;top:618px;width:1338px;height:2px;background:#e3e6eb;"></div>
<div class="abs" style="left:318px;top:620px;width:1338px;height:31px;background:#fff;border-bottom:1px solid #e3e6eb;"></div>
<div class="t" style="left:327.3px;top:627.5px;font-size:14.31px;letter-spacing:-0.091px;">Data Output</div>
<div class="t" style="left:424px;top:627.5px;font-size:14.31px;letter-spacing:0.048px;">Messages</div>
<div class="t" style="left:509.5px;top:627.5px;font-size:14.31px;letter-spacing:0.297px;">Notifications</div>
<div class="abs" style="left:413.500px;top:646.500px;width:86.500px;height:3.500px;background:#326690;"></div>
<svg style="left:1629px;top:628px" width="14" height="14" viewBox="0 0 14 14"><path d="M3 11L11 3" stroke="#1b1b1b" stroke-width="2"/><path d="M7.600 0H14v6.400z" fill="#1b1b1b"/><path d="M0 7.600V14h6.400z" fill="#1b1b1b"/></svg>
<div class="msg" style="top:660.500px;">INSERT 0 5</div>
<div class="msg" style="top:695.200px;">Query returned successfully in 38 msec.</div>
<div class="abs" style="left:318px;top:1077px;width:1338px;height:25px;background:#ebeef3;"></div>
<div class="t" style="left:329px;top:1082.5px;font-size:14.31px;letter-spacing:0.135px;">Total rows: 0 of 0</div>
<div class="abs" style="left:452px;top:1077px;width:1px;height:25px;background:#dde1e8;"></div>
<div class="t" style="left:464.8px;top:1082.5px;font-size:14.31px;letter-spacing:-0.074px;">Query complete 00:00:00.038</div>
<div class="abs" style="left:666px;top:1077px;width:1px;height:25px;background:#dde1e8;"></div>
<div class="t" style="left:1570.8px;top:1083px;font-size:14.31px;letter-spacing:-0.257px;">Ln 6, Col 50</div>
</div>
</body></html>
